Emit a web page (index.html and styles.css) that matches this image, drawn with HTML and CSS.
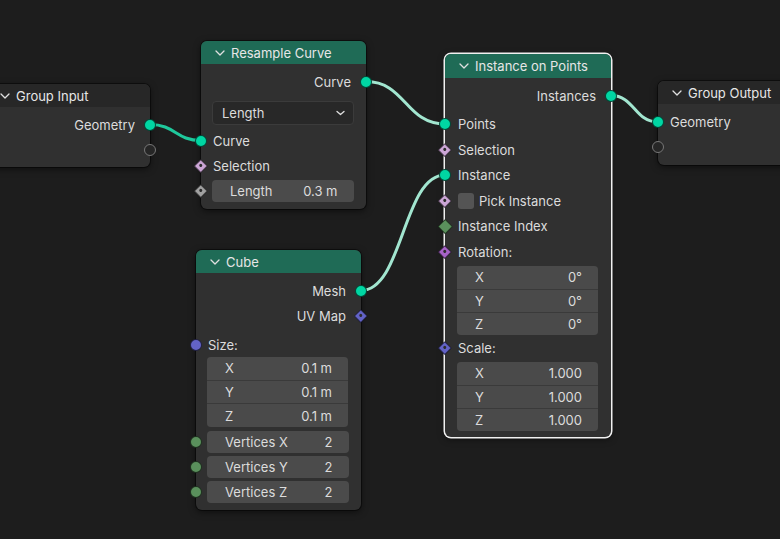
FILE: index.html
```html
<!DOCTYPE html>
<html>
<head>
<meta charset="utf-8">
<link rel="stylesheet" href="styles.css">
</head>
<body>
<div class="editor">
  <svg class="wires" width="780" height="539" viewBox="0 0 780 539">
    <path class="wire" d="M150 124.5 C175.5 124.5 175.5 140.5 201 140.5"/>
    <path class="wire hl" d="M366 81.5 C405.5 81.5 405.5 124 445 124"/>
    <path class="wire hl" d="M361 290.5 C403 290.5 403 175 445 175"/>
    <path class="wire hl" d="M611 95.5 C634.5 95.5 634.5 122 658 122"/>
  </svg>

  <div class="node n-gin">
    <div class="head dark">
      <svg class="chev" width="10" height="6" viewBox="0 0 10 6"><polyline points="1,1 5,5 9,1"/></svg>
      <span>Group Input</span>
    </div>
    <div class="body">
      <div class="row out">Geometry<i class="sock out geo"></i></div>
      <div class="row out"><i class="sock out empty"></i></div>
    </div>
  </div>

  <div class="node n-resample">
    <div class="head">
      <svg class="chev" width="10" height="6" viewBox="0 0 10 6"><polyline points="1,1 5,5 9,1"/></svg>
      <span>Resample Curve</span>
    </div>
    <div class="body">
      <div class="row out">Curve<i class="sock out geo"></i></div>
      <div class="dropdown"><span>Length</span><svg class="chev sm" width="9" height="6" viewBox="0 0 9 6"><polyline points="1,1.5 4.5,4.5 8,1.5"/></svg></div>
      <div class="row first-in"><i class="sock in geo"></i>Curve</div>
      <div class="row"><i class="dia in bool"></i>Selection</div>
      <div class="row frow"><i class="dia in float"></i><div class="field"><span>Length</span><span>0.3 m</span></div></div>
    </div>
  </div>

  <div class="node n-iop selected">
    <div class="head tall">
      <svg class="chev" width="10" height="6" viewBox="0 0 10 6"><polyline points="1,1 5,5 9,1"/></svg>
      <span>Instance on Points</span>
    </div>
    <div class="body">
      <div class="row out">Instances<i class="sock out geo"></i></div>
      <div class="row r first-r"><i class="sock in geo"></i>Points</div>
      <div class="row r"><i class="dia in bool"></i>Selection</div>
      <div class="row r"><i class="sock in geo"></i>Instance</div>
      <div class="row r"><i class="dia in bool"></i><span class="check"></span>Pick Instance</div>
      <div class="row r"><i class="dia in intf big"></i>Instance Index</div>
      <div class="row r"><i class="dia in rot"></i>Rotation:</div>
      <div class="vector v-rot">
        <div class="vrow"><span>X</span><span>0°</span></div>
        <div class="vrow"><span>Y</span><span>0°</span></div>
        <div class="vrow"><span>Z</span><span>0°</span></div>
      </div>
      <div class="row r"><i class="dia in vec"></i>Scale:</div>
      <div class="vector v-scale">
        <div class="vrow"><span>X</span><span>1.000</span></div>
        <div class="vrow"><span>Y</span><span>1.000</span></div>
        <div class="vrow"><span>Z</span><span>1.000</span></div>
      </div>
    </div>
  </div>

  <div class="node n-gout">
    <div class="head dark">
      <svg class="chev" width="10" height="6" viewBox="0 0 10 6"><polyline points="1,1 5,5 9,1"/></svg>
      <span>Group Output</span>
    </div>
    <div class="body">
      <div class="row"><i class="sock in geo"></i>Geometry</div>
      <div class="row"><i class="sock in empty"></i></div>
    </div>
  </div>

  <div class="node n-cube">
    <div class="head">
      <svg class="chev" width="10" height="6" viewBox="0 0 10 6"><polyline points="1,1 5,5 9,1"/></svg>
      <span>Cube</span>
    </div>
    <div class="body">
      <div class="row out">Mesh<i class="sock out geo"></i></div>
      <div class="row out">UV Map<i class="dia out vec"></i></div>
      <div class="row size"><i class="sock in vec"></i>Size:</div>
      <div class="vector v-size">
        <div class="vrow"><span>X</span><span>0.1 m</span></div>
        <div class="vrow"><span>Y</span><span>0.1 m</span></div>
        <div class="vrow"><span>Z</span><span>0.1 m</span></div>
      </div>
      <div class="row frow first-v"><i class="sock in int"></i><div class="field"><span>Vertices X</span><span>2</span></div></div>
      <div class="row frow"><i class="sock in int"></i><div class="field"><span>Vertices Y</span><span>2</span></div></div>
      <div class="row frow"><i class="sock in int"></i><div class="field"><span>Vertices Z</span><span>2</span></div></div>
    </div>
  </div>
</div>
</body>
</html>
```

FILE: styles.css
```css
html, body {
  margin: 0;
  padding: 0;
  background: #1d1d1d;
}

.editor {
  position: relative;
  width: 780px;
  height: 539px;
  overflow: hidden;
  background: #1d1d1d;
  font-family: Inter, "Noto Sans", "DejaVu Sans", sans-serif;
  font-size: 13px;
  color: #dcdcdc;
}

.wires {
  position: absolute;
  left: 0;
  top: 0;
}

.wire {
  fill: none;
  stroke: #1fc89c;
  stroke-width: 3;
  stroke-linecap: round;
}

.wire.hl {
  stroke: #a2e6d0;
}

/* nodes placed on the free canvas */
.node {
  position: absolute;
  background: #303030;
  border-radius: 6px;
  box-shadow: 0 0 0 1px rgba(0, 0, 0, 0.45), 0 2px 7px rgba(0, 0, 0, 0.55);
}

.node.selected {
  box-shadow: 0 0 0 1.5px #f0f0f0, 0 2px 7px rgba(0, 0, 0, 0.55);
}

.n-gin { left: -14px; top: 84px; width: 164px; }
.n-resample { left: 201px; top: 41px; width: 165px; }
.n-iop { left: 445px; top: 54px; width: 166px; }
.n-gout { left: 658px; top: 81px; width: 150px; }
.n-cube { left: 196px; top: 250px; width: 165px; }

.head {
  display: flex;
  align-items: center;
  gap: 6px;
  height: 23px;
  padding-left: 14px;
  background: #1f6b56;
  color: #e6e6e6;
  border-radius: 6px 6px 0 0;
}

.head.tall { height: 24px; }
.head.dark { background: #272727; }

.chev polyline {
  fill: none;
  stroke: #e0e0e0;
  stroke-width: 1.3;
  stroke-linecap: round;
  stroke-linejoin: round;
}

.body {
  display: flex;
  flex-direction: column;
  padding: 5px 0 6px;
}

.n-gin .body { padding: 5px 0 5px; }
.n-gout .body { padding: 5.5px 0 5.5px; }

.row {
  position: relative;
  display: flex;
  align-items: center;
  height: 25px;
  padding: 0 15px 0 12px;
  white-space: nowrap;
}

.row.out { justify-content: flex-end; }
.row.r { height: 25.5px; padding-left: 13px; }
.row.first-r { margin-top: 3.25px; }
.row.first-in { margin-top: 3px; }
.row.size { margin-top: 4px; }
.row.first-v { margin-top: 2px; }
.row.frow { padding: 0 12.5px 0 11px; }

.field {
  flex: 1;
  height: 22px;
  display: flex;
  align-items: center;
  justify-content: space-between;
  padding: 0 16px 0 18px;
  background: #4b4b4b;
  border-radius: 4px;
}

.dropdown {
  margin: 7px 12px 0 11px;
  height: 24px;
  box-sizing: border-box;
  display: flex;
  align-items: center;
  justify-content: space-between;
  padding: 0 8px 0 9px;
  background: #282828;
  border: 1px solid #3b3b3b;
  border-radius: 4px;
}

.check {
  width: 16px;
  height: 16px;
  margin-right: 5px;
  background: #545454;
  border-radius: 3px;
}

.vector {
  display: flex;
  flex-direction: column;
  border-radius: 4px;
  overflow: hidden;
  background: #3a3a3a;
  gap: 1px;
}

.v-rot { margin: 2px 13px 0 12px; height: 69px; }
.v-scale { margin: 1.5px 13px 0 12px; height: 69px; }
.v-size { margin: 0 13px 0 11px; height: 70px; }

.vrow {
  flex: 1;
  display: flex;
  align-items: center;
  justify-content: space-between;
  padding: 0 16px 0 18px;
  background: #4a4a4a;
}

/* sockets */
.sock {
  position: absolute;
  top: 50%;
  width: 12px;
  height: 12px;
  margin-top: -6px;
  box-sizing: border-box;
  border-radius: 50%;
  border: 1px solid rgba(0, 0, 0, 0.65);
}

.sock.in { left: -6px; }
.sock.out { right: -6px; }

.geo { background: #00d6a3; }
.int { background: #5a905c; }
.vec { background: #6363c7; }
.sock.empty {
  background: #262626;
  border: 1.5px solid #777777;
}

.dia {
  position: absolute;
  top: 50%;
  width: 9.5px;
  height: 9.5px;
  margin-top: -4.75px;
  box-sizing: border-box;
  border: 0.75px solid rgba(0, 0, 0, 0.6);
  border-radius: 1px;
  transform: rotate(45deg);
}

.dia::after {
  content: "";
  position: absolute;
  left: 50%;
  top: 50%;
  width: 3px;
  height: 3px;
  margin: -1.5px 0 0 -1.5px;
  background: #2c2c2c;
  border-radius: 50%;
}

.dia.in { left: -4.75px; }
.dia.out { right: -4.75px; }

.dia.big {
  width: 10.5px;
  height: 10.5px;
  margin-top: -5.25px;
  left: -5.25px;
}

.dia.big::after { display: none; }

.bool { background: #cca6d6; }
.float { background: #a1a1a1; }
.rot { background: #a663c7; }
.intf { background: #5a905c; }
.dia.vec { background: #6363c7; }
```
